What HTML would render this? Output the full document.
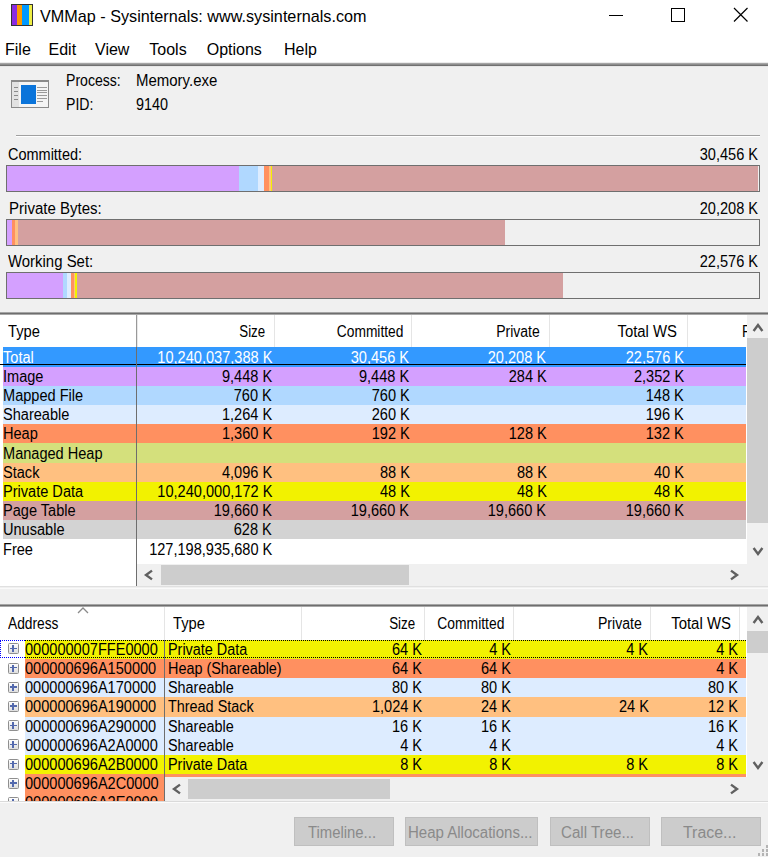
<!DOCTYPE html>
<html><head><meta charset="utf-8"><style>
html,body{margin:0;padding:0}
body{width:768px;height:857px;position:relative;overflow:hidden;background:#f0f0f0;font-family:"Liberation Sans",sans-serif}
.r{position:absolute}
.t{position:absolute;white-space:pre;line-height:20px;font-family:"Liberation Sans",sans-serif}
.pb{position:absolute;width:11px;height:11px;box-sizing:border-box;border:1px solid #8f8f8f;border-radius:1.5px;background:linear-gradient(#fdfdfd,#dedede)}
.pb::before{content:"";position:absolute;left:1.2px;top:3.6px;width:7px;height:1.4px;background:#5369ad}
.pb::after{content:"";position:absolute;left:3.9px;top:1.2px;width:1.4px;height:7px;background:#5369ad}
</style></head><body>
<div class="r" style="left:0px;top:0px;width:768px;height:63px;background:#fff;"></div>
<div class="r" style="left:11px;top:4px;width:22px;height:22px;background:#333;"></div>
<div class="r" style="left:12px;top:5px;width:5px;height:20px;background:#8a2be2;"></div>
<div class="r" style="left:17px;top:5px;width:5px;height:20px;background:#ff9900;"></div>
<div class="r" style="left:22px;top:5px;width:7px;height:20px;background:#0099ff;"></div>
<div class="r" style="left:29px;top:5px;width:3px;height:20px;background:#eeee44;"></div>
<div class="t" style="left:40px;top:5.70px;font-size:16.2px;color:#000;transform-origin:0 0;">VMMap - Sysinternals: www.sysinternals.com</div>
<div class="r" style="left:609px;top:15px;width:14px;height:1.2px;background:#000;"></div>
<div class="r" style="left:671px;top:8px;width:14px;height:14px;background:transparent;border:1.2px solid #000;box-sizing:border-box"></div>
<svg class="r" style="left:733px;top:7px" width="16" height="16" viewBox="0 0 16 16"><path d="M1 1L14.5 14.5M14.5 1L1 14.5" stroke="#000" stroke-width="1.2" fill="none"/></svg>
<div class="t" style="left:5px;top:40.10px;font-size:16px;color:#000;transform-origin:0 0;">File</div>
<div class="t" style="left:48.5px;top:40.10px;font-size:16px;color:#000;transform-origin:0 0;">Edit</div>
<div class="t" style="left:95px;top:40.10px;font-size:16px;color:#000;transform-origin:0 0;">View</div>
<div class="t" style="left:149.3px;top:40.10px;font-size:16px;color:#000;transform-origin:0 0;">Tools</div>
<div class="t" style="left:206.7px;top:40.10px;font-size:16px;color:#000;transform-origin:0 0;">Options</div>
<div class="t" style="left:284px;top:40.10px;font-size:16px;color:#000;transform-origin:0 0;">Help</div>
<div class="r" style="left:0px;top:62px;width:768px;height:1px;background:#ececec;"></div>
<div class="r" style="left:0px;top:63px;width:768px;height:1px;background:#a5a5a5;"></div>
<div class="r" style="left:0px;top:64px;width:768px;height:1px;background:#8c8c8c;"></div>
<div class="r" style="left:0px;top:65px;width:768px;height:1px;background:#707070;"></div>
<div class="r" style="left:0px;top:66px;width:768px;height:1px;background:#e6e6e6;"></div>
<div class="r" style="left:11px;top:80px;width:38px;height:28px;box-sizing:border-box;border:1px solid #8a8a8a;border-top:2px solid #8a8a8a;background:#f4f4f4"></div>
<div class="r" style="left:12px;top:82px;width:7px;height:25px;background:#e2e2e2;"></div>
<div class="r" style="left:14px;top:87px;width:4px;height:1px;background:#8a8a8a;"></div>
<div class="r" style="left:14px;top:91px;width:4px;height:1px;background:#8a8a8a;"></div>
<div class="r" style="left:14px;top:95px;width:4px;height:1px;background:#8a8a8a;"></div>
<div class="r" style="left:14px;top:99px;width:4px;height:1px;background:#8a8a8a;"></div>
<div class="r" style="left:21px;top:85px;width:15px;height:19px;background:#0a74da;"></div>
<div class="r" style="left:37px;top:86.8px;width:10px;height:1px;background:#9a9a9a;"></div>
<div class="r" style="left:37px;top:89.5px;width:10px;height:1px;background:#9a9a9a;"></div>
<div class="r" style="left:37px;top:92.2px;width:10px;height:1px;background:#9a9a9a;"></div>
<div class="r" style="left:37px;top:94.9px;width:10px;height:1px;background:#9a9a9a;"></div>
<div class="r" style="left:37px;top:97.6px;width:10px;height:1px;background:#9a9a9a;"></div>
<div class="r" style="left:37px;top:100.5px;width:6px;height:1px;background:#9a9a9a;"></div>
<div class="t" style="left:65.6px;top:71.20px;font-size:16px;color:#000;transform-origin:0 0;transform:scaleX(0.88);">Process:</div>
<div class="t" style="left:135.7px;top:71.20px;font-size:16px;color:#000;transform-origin:0 0;transform:scaleX(0.936);">Memory.exe</div>
<div class="t" style="left:65.6px;top:95.40px;font-size:16px;color:#000;transform-origin:0 0;transform:scaleX(0.88);">PID:</div>
<div class="t" style="left:135.7px;top:95.40px;font-size:16px;color:#000;transform-origin:0 0;transform:scaleX(0.9);">9140</div>
<div class="r" style="left:16px;top:135px;width:744px;height:1px;background:#a0a0a0;"></div>
<div class="r" style="left:16px;top:136px;width:744px;height:1px;background:#ffffff;"></div>
<div class="t" style="left:8px;top:145.10px;font-size:16px;color:#000;transform-origin:0 0;transform:scaleX(0.905);">Committed:</div>
<div class="t" style="right:10.00px;top:145.10px;font-size:16px;color:#000;text-align:right;transform-origin:100% 0;transform:scaleX(0.91);">30,456 K</div>
<div class="r" style="left:6px;top:165px;width:754px;height:27px;background:#f0f0f0;box-sizing:border-box;border:1px solid #6f6f6f"></div>
<div class="r" style="left:7px;top:166px;width:232.6px;height:25px;background:#d4a0ff;"></div>
<div class="r" style="left:239px;top:166px;width:19.6px;height:25px;background:#b0d8ff;"></div>
<div class="r" style="left:258px;top:166px;width:6.6px;height:25px;background:#ddecff;"></div>
<div class="r" style="left:264px;top:166px;width:6.0px;height:25px;background:#ff9060;"></div>
<div class="r" style="left:269.4px;top:166px;width:1.7px;height:25px;background:#ffc080;"></div>
<div class="r" style="left:270.5px;top:166px;width:2.3px;height:25px;background:#f2f200;"></div>
<div class="r" style="left:272.2px;top:166px;width:485.8px;height:25px;background:#d4a0a0;"></div>
<div class="t" style="left:9.4px;top:198.70px;font-size:16px;color:#000;transform-origin:0 0;transform:scaleX(0.94);">Private Bytes:</div>
<div class="t" style="right:10.00px;top:198.70px;font-size:16px;color:#000;text-align:right;transform-origin:100% 0;transform:scaleX(0.91);">20,208 K</div>
<div class="r" style="left:6px;top:218.6px;width:754px;height:27px;background:#f0f0f0;box-sizing:border-box;border:1px solid #6f6f6f"></div>
<div class="r" style="left:7px;top:219.6px;width:5.6px;height:25px;background:#d4a0ff;"></div>
<div class="r" style="left:12px;top:219.6px;width:3.6px;height:25px;background:#ff9060;"></div>
<div class="r" style="left:15px;top:219.6px;width:3.6px;height:25px;background:#ffc080;"></div>
<div class="r" style="left:18px;top:219.6px;width:487.3px;height:25px;background:#d4a0a0;"></div>
<div class="t" style="left:8px;top:252.30px;font-size:16px;color:#000;transform-origin:0 0;transform:scaleX(0.933);">Working Set:</div>
<div class="t" style="right:10.00px;top:252.30px;font-size:16px;color:#000;text-align:right;transform-origin:100% 0;transform:scaleX(0.91);">22,576 K</div>
<div class="r" style="left:6px;top:272.4px;width:754px;height:27px;background:#f0f0f0;box-sizing:border-box;border:1px solid #6f6f6f"></div>
<div class="r" style="left:7px;top:273.4px;width:56.6px;height:25px;background:#d4a0ff;"></div>
<div class="r" style="left:63px;top:273.4px;width:4.6px;height:25px;background:#b0d8ff;"></div>
<div class="r" style="left:67px;top:273.4px;width:4.6px;height:25px;background:#ddecff;"></div>
<div class="r" style="left:71px;top:273.4px;width:3.1px;height:25px;background:#ff9060;"></div>
<div class="r" style="left:73.5px;top:273.4px;width:1.9px;height:25px;background:#ffc080;"></div>
<div class="r" style="left:74.8px;top:273.4px;width:2.8px;height:25px;background:#f2f200;"></div>
<div class="r" style="left:77px;top:273.4px;width:486px;height:25px;background:#d4a0a0;"></div>
<div class="r" style="left:0px;top:312px;width:768px;height:1px;background:#a5a5a5;"></div>
<div class="r" style="left:0px;top:313px;width:768px;height:1px;background:#6e6e6e;"></div>
<div class="r" style="left:0px;top:314px;width:768px;height:1px;background:#a8a8a8;"></div>
<div class="r" style="left:0px;top:315px;width:747px;height:249px;background:#fff;"></div>
<div class="r" style="left:274px;top:315px;width:1px;height:32.4px;background:#e5e5e5;"></div>
<div class="r" style="left:411px;top:315px;width:1px;height:32.4px;background:#e5e5e5;"></div>
<div class="r" style="left:549px;top:315px;width:1px;height:32.4px;background:#e5e5e5;"></div>
<div class="r" style="left:687px;top:315px;width:1px;height:32.4px;background:#e5e5e5;"></div>
<div class="r" style="left:136px;top:315px;width:1px;height:32.4px;background:#999999;"></div>
<div class="r" style="left:137px;top:315px;width:1px;height:32.4px;background:#e8e8e8;"></div>
<div class="t" style="left:8.3px;top:322.00px;font-size:16px;color:#000;transform-origin:0 0;transform:scaleX(0.92);">Type</div>
<div class="t" style="right:502.70px;top:322.00px;font-size:16px;color:#000;text-align:right;transform-origin:100% 0;transform:scaleX(0.83);">Size</div>
<div class="t" style="right:365.00px;top:322.00px;font-size:16px;color:#000;text-align:right;transform-origin:100% 0;transform:scaleX(0.86);">Committed</div>
<div class="t" style="right:228.00px;top:322.00px;font-size:16px;color:#000;text-align:right;transform-origin:100% 0;transform:scaleX(0.875);">Private</div>
<div class="t" style="right:90.50px;top:322.00px;font-size:16px;color:#000;text-align:right;transform-origin:100% 0;transform:scaleX(0.93);">Total WS</div>
<div class="r" style="left:742px;top:315px;width:5px;height:32px;overflow:hidden"><div class="t" style="left:0;top:7px;font-size:16px;transform:scaleX(0.86);transform-origin:0 0">P</div></div>
<div class="r" style="left:3px;top:347.40px;width:743px;height:19.2px;background:#3399ff;"></div>
<div class="t" style="left:3.3px;top:347.65px;font-size:16px;color:#fff;transform-origin:0 0;transform:scaleX(0.91);">Total</div>
<div class="t" style="right:496.00px;top:347.65px;font-size:16px;color:#fff;text-align:right;transform-origin:100% 0;transform:scaleX(0.91);">10,240,037,388 K</div>
<div class="t" style="right:358.50px;top:347.65px;font-size:16px;color:#fff;text-align:right;transform-origin:100% 0;transform:scaleX(0.91);">30,456 K</div>
<div class="t" style="right:221.50px;top:347.65px;font-size:16px;color:#fff;text-align:right;transform-origin:100% 0;transform:scaleX(0.91);">20,208 K</div>
<div class="t" style="right:84.00px;top:347.65px;font-size:16px;color:#fff;text-align:right;transform-origin:100% 0;transform:scaleX(0.91);">22,576 K</div>
<div class="r" style="left:3px;top:366.60px;width:743px;height:19.2px;background:#d4a0ff;"></div>
<div class="t" style="left:3.3px;top:366.85px;font-size:16px;color:#000;transform-origin:0 0;transform:scaleX(0.91);">Image</div>
<div class="t" style="right:496.00px;top:366.85px;font-size:16px;color:#000;text-align:right;transform-origin:100% 0;transform:scaleX(0.91);">9,448 K</div>
<div class="t" style="right:358.50px;top:366.85px;font-size:16px;color:#000;text-align:right;transform-origin:100% 0;transform:scaleX(0.91);">9,448 K</div>
<div class="t" style="right:221.50px;top:366.85px;font-size:16px;color:#000;text-align:right;transform-origin:100% 0;transform:scaleX(0.91);">284 K</div>
<div class="t" style="right:84.00px;top:366.85px;font-size:16px;color:#000;text-align:right;transform-origin:100% 0;transform:scaleX(0.91);">2,352 K</div>
<div class="r" style="left:3px;top:385.80px;width:743px;height:19.2px;background:#b0d8ff;"></div>
<div class="t" style="left:3.3px;top:386.05px;font-size:16px;color:#000;transform-origin:0 0;transform:scaleX(0.91);">Mapped File</div>
<div class="t" style="right:496.00px;top:386.05px;font-size:16px;color:#000;text-align:right;transform-origin:100% 0;transform:scaleX(0.91);">760 K</div>
<div class="t" style="right:358.50px;top:386.05px;font-size:16px;color:#000;text-align:right;transform-origin:100% 0;transform:scaleX(0.91);">760 K</div>
<div class="t" style="right:84.00px;top:386.05px;font-size:16px;color:#000;text-align:right;transform-origin:100% 0;transform:scaleX(0.91);">148 K</div>
<div class="r" style="left:3px;top:405.00px;width:743px;height:19.2px;background:#ddecff;"></div>
<div class="t" style="left:3.3px;top:405.25px;font-size:16px;color:#000;transform-origin:0 0;transform:scaleX(0.91);">Shareable</div>
<div class="t" style="right:496.00px;top:405.25px;font-size:16px;color:#000;text-align:right;transform-origin:100% 0;transform:scaleX(0.91);">1,264 K</div>
<div class="t" style="right:358.50px;top:405.25px;font-size:16px;color:#000;text-align:right;transform-origin:100% 0;transform:scaleX(0.91);">260 K</div>
<div class="t" style="right:84.00px;top:405.25px;font-size:16px;color:#000;text-align:right;transform-origin:100% 0;transform:scaleX(0.91);">196 K</div>
<div class="r" style="left:3px;top:424.20px;width:743px;height:19.2px;background:#ff9060;"></div>
<div class="t" style="left:3.3px;top:424.45px;font-size:16px;color:#000;transform-origin:0 0;transform:scaleX(0.91);">Heap</div>
<div class="t" style="right:496.00px;top:424.45px;font-size:16px;color:#000;text-align:right;transform-origin:100% 0;transform:scaleX(0.91);">1,360 K</div>
<div class="t" style="right:358.50px;top:424.45px;font-size:16px;color:#000;text-align:right;transform-origin:100% 0;transform:scaleX(0.91);">192 K</div>
<div class="t" style="right:221.50px;top:424.45px;font-size:16px;color:#000;text-align:right;transform-origin:100% 0;transform:scaleX(0.91);">128 K</div>
<div class="t" style="right:84.00px;top:424.45px;font-size:16px;color:#000;text-align:right;transform-origin:100% 0;transform:scaleX(0.91);">132 K</div>
<div class="r" style="left:3px;top:443.40px;width:743px;height:19.2px;background:#d4e07c;"></div>
<div class="t" style="left:3.3px;top:443.65px;font-size:16px;color:#000;transform-origin:0 0;transform:scaleX(0.91);">Managed Heap</div>
<div class="r" style="left:3px;top:462.60px;width:743px;height:19.2px;background:#ffc080;"></div>
<div class="t" style="left:3.3px;top:462.85px;font-size:16px;color:#000;transform-origin:0 0;transform:scaleX(0.91);">Stack</div>
<div class="t" style="right:496.00px;top:462.85px;font-size:16px;color:#000;text-align:right;transform-origin:100% 0;transform:scaleX(0.91);">4,096 K</div>
<div class="t" style="right:358.50px;top:462.85px;font-size:16px;color:#000;text-align:right;transform-origin:100% 0;transform:scaleX(0.91);">88 K</div>
<div class="t" style="right:221.50px;top:462.85px;font-size:16px;color:#000;text-align:right;transform-origin:100% 0;transform:scaleX(0.91);">88 K</div>
<div class="t" style="right:84.00px;top:462.85px;font-size:16px;color:#000;text-align:right;transform-origin:100% 0;transform:scaleX(0.91);">40 K</div>
<div class="r" style="left:3px;top:481.80px;width:743px;height:19.2px;background:#f2f200;"></div>
<div class="t" style="left:3.3px;top:482.05px;font-size:16px;color:#000;transform-origin:0 0;transform:scaleX(0.91);">Private Data</div>
<div class="t" style="right:496.00px;top:482.05px;font-size:16px;color:#000;text-align:right;transform-origin:100% 0;transform:scaleX(0.91);">10,240,000,172 K</div>
<div class="t" style="right:358.50px;top:482.05px;font-size:16px;color:#000;text-align:right;transform-origin:100% 0;transform:scaleX(0.91);">48 K</div>
<div class="t" style="right:221.50px;top:482.05px;font-size:16px;color:#000;text-align:right;transform-origin:100% 0;transform:scaleX(0.91);">48 K</div>
<div class="t" style="right:84.00px;top:482.05px;font-size:16px;color:#000;text-align:right;transform-origin:100% 0;transform:scaleX(0.91);">48 K</div>
<div class="r" style="left:3px;top:501.00px;width:743px;height:19.2px;background:#d4a0a0;"></div>
<div class="t" style="left:3.3px;top:501.25px;font-size:16px;color:#000;transform-origin:0 0;transform:scaleX(0.91);">Page Table</div>
<div class="t" style="right:496.00px;top:501.25px;font-size:16px;color:#000;text-align:right;transform-origin:100% 0;transform:scaleX(0.91);">19,660 K</div>
<div class="t" style="right:358.50px;top:501.25px;font-size:16px;color:#000;text-align:right;transform-origin:100% 0;transform:scaleX(0.91);">19,660 K</div>
<div class="t" style="right:221.50px;top:501.25px;font-size:16px;color:#000;text-align:right;transform-origin:100% 0;transform:scaleX(0.91);">19,660 K</div>
<div class="t" style="right:84.00px;top:501.25px;font-size:16px;color:#000;text-align:right;transform-origin:100% 0;transform:scaleX(0.91);">19,660 K</div>
<div class="r" style="left:3px;top:520.20px;width:743px;height:19.2px;background:#d3d3d3;"></div>
<div class="t" style="left:3.3px;top:520.45px;font-size:16px;color:#000;transform-origin:0 0;transform:scaleX(0.91);">Unusable</div>
<div class="t" style="right:496.00px;top:520.45px;font-size:16px;color:#000;text-align:right;transform-origin:100% 0;transform:scaleX(0.91);">628 K</div>
<div class="t" style="left:3.3px;top:539.65px;font-size:16px;color:#000;transform-origin:0 0;transform:scaleX(0.91);">Free</div>
<div class="t" style="right:496.00px;top:539.65px;font-size:16px;color:#000;text-align:right;transform-origin:100% 0;transform:scaleX(0.91);">127,198,935,680 K</div>
<div class="r" style="left:0px;top:364px;width:746px;height:1px;background:#000;"></div>
<div class="r" style="left:136px;top:347px;width:1px;height:239px;background:#6e6e6e;"></div>
<div class="r" style="left:747px;top:315px;width:21px;height:271px;background:#f0f0f0;"></div>
<div class="r" style="left:747px;top:338px;width:21px;height:184.5px;background:#cdcdcd;"></div>
<svg class="r" style="left:752px;top:321px" width="12" height="12" viewBox="0 0 12 12"><path d="M1.6 10L6 4L10.4 10" stroke="#606060" stroke-width="2.4" fill="none"/></svg>
<svg class="r" style="left:752px;top:546px" width="12" height="12" viewBox="0 0 12 12"><path d="M1.6 2L6 8L10.4 2" stroke="#606060" stroke-width="2.4" fill="none"/></svg>
<div class="r" style="left:137px;top:564px;width:610px;height:22px;background:#f0f0f0;"></div>
<div class="r" style="left:161px;top:564.5px;width:248px;height:20.3px;background:#cdcdcd;"></div>
<svg class="r" style="left:142px;top:569px" width="12" height="12" viewBox="0 0 12 12"><path d="M10 1.6L4 6L10 10.4" stroke="#606060" stroke-width="2.4" fill="none"/></svg>
<svg class="r" style="left:729px;top:569px" width="12" height="12" viewBox="0 0 12 12"><path d="M2 1.6L8 6L2 10.4" stroke="#606060" stroke-width="2.4" fill="none"/></svg>
<div class="r" style="left:0px;top:564px;width:136px;height:22px;background:#fff;"></div>
<div class="r" style="left:0px;top:586px;width:768px;height:1px;background:#e0e0e0;"></div>
<div class="r" style="left:0px;top:587.5px;width:768px;height:1px;background:#fafafa;"></div>
<div class="r" style="left:0px;top:604px;width:768px;height:1px;background:#a5a5a5;"></div>
<div class="r" style="left:0px;top:605px;width:768px;height:1px;background:#6e6e6e;"></div>
<div class="r" style="left:0px;top:606px;width:768px;height:1px;background:#a8a8a8;"></div>
<div class="r" style="left:0px;top:607px;width:747px;height:194px;background:#fff;"></div>
<div class="r" style="left:164px;top:607px;width:1px;height:32.8px;background:#e5e5e5;"></div>
<div class="r" style="left:301px;top:607px;width:1px;height:32.8px;background:#e5e5e5;"></div>
<div class="r" style="left:424px;top:607px;width:1px;height:32.8px;background:#e5e5e5;"></div>
<div class="r" style="left:513px;top:607px;width:1px;height:32.8px;background:#e5e5e5;"></div>
<div class="r" style="left:650px;top:607px;width:1px;height:32.8px;background:#e5e5e5;"></div>
<div class="r" style="left:739px;top:607px;width:1px;height:32.8px;background:#e5e5e5;"></div>
<svg class="r" style="left:77px;top:606px" width="12" height="8" viewBox="0 0 12 8"><path d="M1 7L6 2L11 7" stroke="#8a8a8a" stroke-width="1.3" fill="none"/></svg>
<div class="t" style="left:8.3px;top:614.20px;font-size:16px;color:#000;transform-origin:0 0;transform:scaleX(0.86);">Address</div>
<div class="t" style="left:173.2px;top:614.20px;font-size:16px;color:#000;transform-origin:0 0;transform:scaleX(0.92);">Type</div>
<div class="t" style="right:353.00px;top:614.20px;font-size:16px;color:#000;text-align:right;transform-origin:100% 0;transform:scaleX(0.835);">Size</div>
<div class="t" style="right:264.00px;top:614.20px;font-size:16px;color:#000;text-align:right;transform-origin:100% 0;transform:scaleX(0.866);">Committed</div>
<div class="t" style="right:126.30px;top:614.20px;font-size:16px;color:#000;text-align:right;transform-origin:100% 0;transform:scaleX(0.88);">Private</div>
<div class="t" style="right:37.25px;top:614.20px;font-size:16px;color:#000;text-align:right;transform-origin:100% 0;transform:scaleX(0.935);">Total WS</div>
<div class="r" style="left:0;top:607px;width:768px;height:194px;overflow:hidden">
<div class="r" style="left:25px;top:32.80px;width:721px;height:19.2px;background:#f2f200;"></div>
<div class="t" style="left:25.4px;top:32.70px;font-size:16px;color:#000;transform-origin:0 0;transform:scaleX(0.91);">000000007FFE0000</div>
<div class="t" style="left:168.3px;top:32.70px;font-size:16px;color:#000;transform-origin:0 0;transform:scaleX(0.9);">Private Data</div>
<div class="t" style="right:346.25px;top:32.70px;font-size:16px;color:#000;text-align:right;transform-origin:100% 0;transform:scaleX(0.91);">64 K</div>
<div class="t" style="right:256.70px;top:32.70px;font-size:16px;color:#000;text-align:right;transform-origin:100% 0;transform:scaleX(0.91);">4 K</div>
<div class="t" style="right:119.50px;top:32.70px;font-size:16px;color:#000;text-align:right;transform-origin:100% 0;transform:scaleX(0.91);">4 K</div>
<div class="t" style="right:30.40px;top:32.70px;font-size:16px;color:#000;text-align:right;transform-origin:100% 0;transform:scaleX(0.91);">4 K</div>
<div class="pb" style="left:7.5px;top:36.30px"></div>
<div class="r" style="left:25px;top:52.00px;width:721px;height:19.2px;background:#ff9060;"></div>
<div class="t" style="left:25.4px;top:51.90px;font-size:16px;color:#000;transform-origin:0 0;transform:scaleX(0.91);">000000696A150000</div>
<div class="t" style="left:168.3px;top:51.90px;font-size:16px;color:#000;transform-origin:0 0;transform:scaleX(0.9);">Heap (Shareable)</div>
<div class="t" style="right:346.25px;top:51.90px;font-size:16px;color:#000;text-align:right;transform-origin:100% 0;transform:scaleX(0.91);">64 K</div>
<div class="t" style="right:256.70px;top:51.90px;font-size:16px;color:#000;text-align:right;transform-origin:100% 0;transform:scaleX(0.91);">64 K</div>
<div class="t" style="right:30.40px;top:51.90px;font-size:16px;color:#000;text-align:right;transform-origin:100% 0;transform:scaleX(0.91);">4 K</div>
<div class="pb" style="left:7.5px;top:55.50px"></div>
<div class="r" style="left:25px;top:71.20px;width:721px;height:19.2px;background:#ddecff;"></div>
<div class="t" style="left:25.4px;top:71.10px;font-size:16px;color:#000;transform-origin:0 0;transform:scaleX(0.91);">000000696A170000</div>
<div class="t" style="left:168.3px;top:71.10px;font-size:16px;color:#000;transform-origin:0 0;transform:scaleX(0.9);">Shareable</div>
<div class="t" style="right:346.25px;top:71.10px;font-size:16px;color:#000;text-align:right;transform-origin:100% 0;transform:scaleX(0.91);">80 K</div>
<div class="t" style="right:256.70px;top:71.10px;font-size:16px;color:#000;text-align:right;transform-origin:100% 0;transform:scaleX(0.91);">80 K</div>
<div class="t" style="right:30.40px;top:71.10px;font-size:16px;color:#000;text-align:right;transform-origin:100% 0;transform:scaleX(0.91);">80 K</div>
<div class="pb" style="left:7.5px;top:74.70px"></div>
<div class="r" style="left:25px;top:90.40px;width:721px;height:19.2px;background:#ffc080;"></div>
<div class="t" style="left:25.4px;top:90.30px;font-size:16px;color:#000;transform-origin:0 0;transform:scaleX(0.91);">000000696A190000</div>
<div class="t" style="left:168.3px;top:90.30px;font-size:16px;color:#000;transform-origin:0 0;transform:scaleX(0.9);">Thread Stack</div>
<div class="t" style="right:346.25px;top:90.30px;font-size:16px;color:#000;text-align:right;transform-origin:100% 0;transform:scaleX(0.91);">1,024 K</div>
<div class="t" style="right:256.70px;top:90.30px;font-size:16px;color:#000;text-align:right;transform-origin:100% 0;transform:scaleX(0.91);">24 K</div>
<div class="t" style="right:119.50px;top:90.30px;font-size:16px;color:#000;text-align:right;transform-origin:100% 0;transform:scaleX(0.91);">24 K</div>
<div class="t" style="right:30.40px;top:90.30px;font-size:16px;color:#000;text-align:right;transform-origin:100% 0;transform:scaleX(0.91);">12 K</div>
<div class="pb" style="left:7.5px;top:93.90px"></div>
<div class="r" style="left:25px;top:109.60px;width:721px;height:19.2px;background:#ddecff;"></div>
<div class="t" style="left:25.4px;top:109.50px;font-size:16px;color:#000;transform-origin:0 0;transform:scaleX(0.91);">000000696A290000</div>
<div class="t" style="left:168.3px;top:109.50px;font-size:16px;color:#000;transform-origin:0 0;transform:scaleX(0.9);">Shareable</div>
<div class="t" style="right:346.25px;top:109.50px;font-size:16px;color:#000;text-align:right;transform-origin:100% 0;transform:scaleX(0.91);">16 K</div>
<div class="t" style="right:256.70px;top:109.50px;font-size:16px;color:#000;text-align:right;transform-origin:100% 0;transform:scaleX(0.91);">16 K</div>
<div class="t" style="right:30.40px;top:109.50px;font-size:16px;color:#000;text-align:right;transform-origin:100% 0;transform:scaleX(0.91);">16 K</div>
<div class="pb" style="left:7.5px;top:113.10px"></div>
<div class="r" style="left:25px;top:128.80px;width:721px;height:19.2px;background:#ddecff;"></div>
<div class="t" style="left:25.4px;top:128.70px;font-size:16px;color:#000;transform-origin:0 0;transform:scaleX(0.91);">000000696A2A0000</div>
<div class="t" style="left:168.3px;top:128.70px;font-size:16px;color:#000;transform-origin:0 0;transform:scaleX(0.9);">Shareable</div>
<div class="t" style="right:346.25px;top:128.70px;font-size:16px;color:#000;text-align:right;transform-origin:100% 0;transform:scaleX(0.91);">4 K</div>
<div class="t" style="right:256.70px;top:128.70px;font-size:16px;color:#000;text-align:right;transform-origin:100% 0;transform:scaleX(0.91);">4 K</div>
<div class="t" style="right:30.40px;top:128.70px;font-size:16px;color:#000;text-align:right;transform-origin:100% 0;transform:scaleX(0.91);">4 K</div>
<div class="pb" style="left:7.5px;top:132.30px"></div>
<div class="r" style="left:25px;top:148.00px;width:721px;height:19.2px;background:#f2f200;"></div>
<div class="t" style="left:25.4px;top:147.90px;font-size:16px;color:#000;transform-origin:0 0;transform:scaleX(0.91);">000000696A2B0000</div>
<div class="t" style="left:168.3px;top:147.90px;font-size:16px;color:#000;transform-origin:0 0;transform:scaleX(0.9);">Private Data</div>
<div class="t" style="right:346.25px;top:147.90px;font-size:16px;color:#000;text-align:right;transform-origin:100% 0;transform:scaleX(0.91);">8 K</div>
<div class="t" style="right:256.70px;top:147.90px;font-size:16px;color:#000;text-align:right;transform-origin:100% 0;transform:scaleX(0.91);">8 K</div>
<div class="t" style="right:119.50px;top:147.90px;font-size:16px;color:#000;text-align:right;transform-origin:100% 0;transform:scaleX(0.91);">8 K</div>
<div class="t" style="right:30.40px;top:147.90px;font-size:16px;color:#000;text-align:right;transform-origin:100% 0;transform:scaleX(0.91);">8 K</div>
<div class="pb" style="left:7.5px;top:151.50px"></div>
<div class="r" style="left:25px;top:167.20px;width:721px;height:19.2px;background:#ff9060;"></div>
<div class="t" style="left:25.4px;top:167.10px;font-size:16px;color:#000;transform-origin:0 0;transform:scaleX(0.91);">000000696A2C0000</div>
<div class="pb" style="left:7.5px;top:170.70px"></div>
<div class="r" style="left:25px;top:186.40px;width:721px;height:19.2px;background:#ff9060;"></div>
<div class="t" style="left:25.4px;top:186.30px;font-size:16px;color:#000;transform-origin:0 0;transform:scaleX(0.91);">000000696A2E0000</div>
<div class="pb" style="left:7.5px;top:189.90px"></div>
</div>
<div class="r" style="left:164px;top:639.8px;width:1px;height:161px;background:#6e6e6e;"></div>
<div class="r" style="left:0px;top:640px;width:25px;height:18px;box-sizing:border-box;border:1px dotted #0000ff;border-right:none"></div>
<div class="r" style="left:25px;top:640px;width:721px;height:18px;box-sizing:border-box;border:1px dotted #000;border-left:none;border-right:none"></div>
<div class="r" style="left:747px;top:607px;width:21px;height:170px;background:#f0f0f0;"></div>
<div class="r" style="left:747px;top:630.6px;width:21px;height:22.4px;background:#cdcdcd;"></div>
<svg class="r" style="left:752px;top:613px" width="12" height="12" viewBox="0 0 12 12"><path d="M1.6 10L6 4L10.4 10" stroke="#606060" stroke-width="2.4" fill="none"/></svg>
<svg class="r" style="left:752px;top:760px" width="12" height="12" viewBox="0 0 12 12"><path d="M1.6 2L6 8L10.4 2" stroke="#606060" stroke-width="2.4" fill="none"/></svg>
<div class="r" style="left:165px;top:777px;width:603px;height:24px;background:#f0f0f0;"></div>
<div class="r" style="left:188.25px;top:778.75px;width:201.75px;height:20px;background:#cdcdcd;"></div>
<svg class="r" style="left:170px;top:783px" width="12" height="12" viewBox="0 0 12 12"><path d="M10 1.6L4 6L10 10.4" stroke="#606060" stroke-width="2.4" fill="none"/></svg>
<svg class="r" style="left:729px;top:783px" width="12" height="12" viewBox="0 0 12 12"><path d="M2 1.6L8 6L2 10.4" stroke="#606060" stroke-width="2.4" fill="none"/></svg>
<div class="r" style="left:0px;top:801px;width:768px;height:1px;background:#dadada;"></div>
<div class="r" style="left:0px;top:802px;width:768px;height:1px;background:#fbfbfb;"></div>
<div class="r" style="left:294.2px;top:817px;width:99.7px;height:29px;background:#cccccc;box-sizing:border-box;border:1px solid #bfbfbf"></div>
<div class="t" style="left:307.7px;top:823.30px;font-size:16px;color:#8a8a8a;transform-origin:0 0;transform:scaleX(0.929);">Timeline...</div>
<div class="r" style="left:405.2px;top:817px;width:133.3px;height:29px;background:#cccccc;box-sizing:border-box;border:1px solid #bfbfbf"></div>
<div class="t" style="left:408.3px;top:823.30px;font-size:16px;color:#8a8a8a;transform-origin:0 0;transform:scaleX(0.939);">Heap Allocations...</div>
<div class="r" style="left:549.5px;top:817px;width:100.4px;height:29px;background:#cccccc;box-sizing:border-box;border:1px solid #bfbfbf"></div>
<div class="t" style="left:561.4px;top:823.30px;font-size:16px;color:#8a8a8a;transform-origin:0 0;transform:scaleX(0.944);">Call Tree...</div>
<div class="r" style="left:660.8px;top:817px;width:100.4px;height:29px;background:#cccccc;box-sizing:border-box;border:1px solid #bfbfbf"></div>
<div class="t" style="left:683.4px;top:823.30px;font-size:16px;color:#8a8a8a;transform-origin:0 0;transform:scaleX(0.994);">Trace...</div>
<div class="r" style="left:765.5px;top:845px;width:2.5px;height:2.5px;background:#b4b4b4;"></div>
<div class="r" style="left:761.5px;top:849px;width:2.5px;height:2.5px;background:#b4b4b4;"></div>
<div class="r" style="left:765.5px;top:849px;width:2.5px;height:2.5px;background:#b4b4b4;"></div>
<div class="r" style="left:757.5px;top:853px;width:2.5px;height:2.5px;background:#b4b4b4;"></div>
<div class="r" style="left:761.5px;top:853px;width:2.5px;height:2.5px;background:#b4b4b4;"></div>
<div class="r" style="left:765.5px;top:853px;width:2.5px;height:2.5px;background:#b4b4b4;"></div>
</body></html>
